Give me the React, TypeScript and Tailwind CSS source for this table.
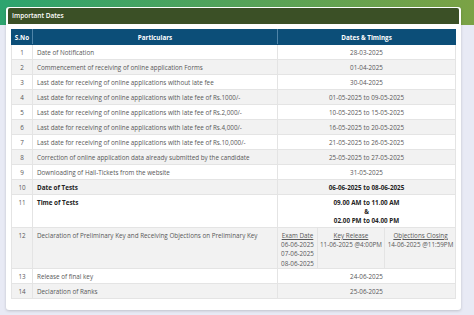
type Row = {
  no: string;
  label: string;
  value: string;
  bold?: boolean;
};

const ROWS: Row[] = [
  { no: '1', label: 'Date of Notification', value: '28-03-2025' },
  { no: '2', label: 'Commencement of receiving of online application Forms', value: '01-04-2025' },
  { no: '3', label: 'Last date for receiving of online applications without late fee', value: '30-04-2025' },
  { no: '4', label: 'Last date for receiving of online applications with late fee of Rs.1000/-', value: '01-05-2025 to 09-05-2025' },
  { no: '5', label: 'Last date for receiving of online applications with late fee of Rs.2,000/-', value: '10-05-2025 to 15-05-2025' },
  { no: '6', label: 'Last date for receiving of online applications with late fee of Rs.4,000/-', value: '16-05-2025 to 20-05-2025' },
  { no: '7', label: 'Last date for receiving of online applications with late fee of Rs.10,000/-', value: '21-05-2025 to 26-05-2025' },
  { no: '8', label: 'Correction of online application data already submitted by the candidate', value: '25-05-2025 to 27-05-2025' },
  { no: '9', label: 'Downloading of Hall-Tickets from the website', value: '31-05-2025' },
  { no: '10', label: 'Date of Tests', value: '06-06-2025 to 08-06-2025', bold: true },
];

const cell = 'border border-[#e4e4e4] px-[3px] pt-[3px] pb-[2px] align-top leading-[9px]';

export default function App() {
  return (
    <div className="w-[474px] h-[315px] overflow-hidden bg-[#e8eaf5] bg-[linear-gradient(to_bottom,transparent_25px,#e8eaf5_25px),linear-gradient(to_right,#2da46f,#7ba245)] pt-[7px] pl-[6px] font-['Open_Sans',sans-serif]">
      <div className="w-[455px] h-[303px] bg-white rounded-[3px] shadow-[0_1px_3px_rgba(0,0,0,0.18)] px-[2px] pt-[1px]">
        {/* Card header */}
        <div className="h-[16px] bg-[#3b5026] rounded-t-[2px] flex items-center pl-[4px] text-white text-[6.5px] font-semibold">
          Important Dates
        </div>

        <div className="pl-[3px] pt-[5px]">
          <table className="table-fixed border-collapse w-[444px] text-[6.3px] text-[#585858]">
            <colgroup>
              <col className="w-[21px]" />
              <col className="w-[245px]" />
              <col className="w-[178px]" />
            </colgroup>
            <thead>
              <tr className="bg-[#0c4e78] text-white font-bold">
                <th className="border border-[#0c4e78] border-r-[#4f84a8] text-center h-[15px] p-0 leading-[9px]">S.No</th>
                <th className="border border-[#0c4e78] border-r-[#4f84a8] text-center h-[15px] p-0 leading-[9px]">Particulars</th>
                <th className="border border-[#0c4e78] text-center h-[15px] p-0 leading-[9px]">Dates &amp; Timings</th>
              </tr>
            </thead>
            <tbody>
              {ROWS.map((r, i) => (
                <tr key={r.no} className={i % 2 === 1 ? 'bg-[#f2f2f2]' : 'bg-white'}>
                  <td className={`${cell} text-center`}>{r.no}</td>
                  <td className={`${cell} pl-[4px] ${r.bold ? 'font-bold text-[#222]' : ''}`}>{r.label}</td>
                  <td className={`${cell} text-center ${r.bold ? 'font-bold text-[#222]' : ''}`}>{r.value}</td>
                </tr>
              ))}
              <tr className="bg-white">
                <td className={`${cell} text-center`}>11</td>
                <td className={`${cell} pl-[4px] font-bold text-[#222]`}>Time of Tests</td>
                <td className={`${cell} text-center font-bold text-[#222]`}>
                  <div>09.00 AM to 11.00 AM</div>
                  <div>&amp;</div>
                  <div>02.00 PM to 04.00 PM</div>
                </td>
              </tr>
              <tr className="bg-[#f2f2f2]">
                <td className={`${cell} text-center`}>12</td>
                <td className={`${cell} pl-[4px]`}>
                  Declaration of Preliminary Key and Receiving Objections on Preliminary Key
                </td>
                <td className="border border-[#e4e4e4] p-0 align-top leading-[9.2px]">
                  <div className="grid grid-cols-[40px_67px_71px] h-[40px]">
                    <div className="border-r border-[#e4e4e4] text-center pt-[3px]">
                      <div className="underline">Exam Date</div>
                      <div>06-06-2025</div>
                      <div>07-06-2025</div>
                      <div>08-06-2025</div>
                    </div>
                    <div className="border-r border-[#e4e4e4] text-center pt-[3px]">
                      <div className="underline">Key Release</div>
                      <div>11-06-2025 @4:00PM</div>
                    </div>
                    <div className="text-center pt-[3px]">
                      <div className="underline">Objections Closing</div>
                      <div>14-06-2025 @11:59PM</div>
                    </div>
                  </div>
                </td>
              </tr>
              <tr className="bg-white">
                <td className={`${cell} text-center`}>13</td>
                <td className={`${cell} pl-[4px]`}>Release of final key</td>
                <td className={`${cell} text-center`}>24-06-2025</td>
              </tr>
              <tr className="bg-[#f2f2f2]">
                <td className={`${cell} text-center`}>14</td>
                <td className={`${cell} pl-[4px]`}>Declaration of Ranks</td>
                <td className={`${cell} text-center`}>25-06-2025</td>
              </tr>
            </tbody>
          </table>
        </div>
      </div>
    </div>
  );
}
